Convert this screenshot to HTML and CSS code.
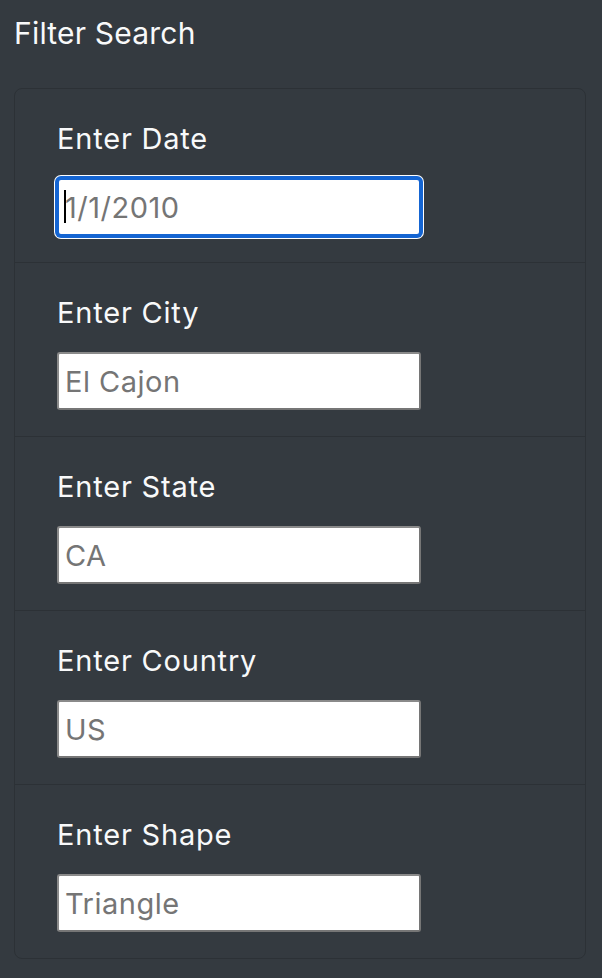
FILE: index.html
```html
<!DOCTYPE html>
<html lang="en">
<head>
<meta charset="utf-8">
<title>Filter Search</title>
<link rel="stylesheet" href="styles.css">
</head>
<body>
<main class="panel">
  <h5 class="title">Filter Search</h5>
  <ul class="filters">
    <li class="filter">
      <label class="filter-label" for="datetime">Enter Date</label>
      <div class="field focused">
        <input class="filter-input" id="datetime" type="text" placeholder="1/1/2010">
        <span class="caret"></span>
      </div>
    </li>
    <li class="filter">
      <label class="filter-label" for="city">Enter City</label>
      <div class="field">
        <input class="filter-input" id="city" type="text" placeholder="El Cajon">
      </div>
    </li>
    <li class="filter">
      <label class="filter-label" for="state">Enter State</label>
      <div class="field">
        <input class="filter-input" id="state" type="text" placeholder="CA">
      </div>
    </li>
    <li class="filter">
      <label class="filter-label" for="country">Enter Country</label>
      <div class="field">
        <input class="filter-input" id="country" type="text" placeholder="US">
      </div>
    </li>
    <li class="filter">
      <label class="filter-label" for="shape">Enter Shape</label>
      <div class="field">
        <input class="filter-input" id="shape" type="text" placeholder="Triangle">
      </div>
    </li>
  </ul>
</main>
</body>
</html>
```
FILE: styles.css
```css
html, body {
  margin: 0;
  padding: 0;
  background: #343a40;
  height: 100%;
}
body {
  font-family: Inter, "Noto Sans", "Liberation Sans", sans-serif;
  color: #f8f9fa;
}
.panel {
  padding: 14px 16px 0 14px;
}
.title {
  margin: 0;
  font-size: 30px;
  font-weight: 400;
  line-height: 38px;
  letter-spacing: 0.2px;
  color: #f8f9fa;
}
.filters {
  list-style: none;
  margin: 36px 0 0 0;
  padding: 0;
  border: 1px solid #2c3136;
  border-radius: 8px;
}
.filter {
  padding: 33px 42px 26px 42px;
  border-top: 1px solid #2c3136;
}
.filter:first-child {
  border-top: none;
}
.filter-label {
  display: block;
  font-size: 29px;
  line-height: 34px;
  letter-spacing: 0.8px;
  margin-bottom: 22px;
  color: #f8f9fa;
}
.field {
  position: relative;
  width: 364px;
}
.filter-input {
  box-sizing: border-box;
  display: block;
  width: 364px;
  height: 58px;
  margin: 0;
  padding: 0 6px;
  font-family: Inter, "Noto Sans", "Liberation Sans", sans-serif;
  font-size: 29px;
  letter-spacing: 0.5px;
  color: #212529;
  background: #fff;
  border: 2px solid #767676;
  border-top-color: #8a8a8a;
  border-left-color: #8a8a8a;
  border-radius: 3px;
  outline: none;
}
.filter-input::placeholder {
  color: #757575;
}
.focused .filter-input {
  border-color: #1565d2;
  box-shadow: 0 0 0 2px #1565d2, 0 0 0 3px #ffffff;
  border-radius: 4px;
}
.caret {
  position: absolute;
  left: 7px;
  top: 12px;
  width: 2px;
  height: 33px;
  background: #000;
}
```
